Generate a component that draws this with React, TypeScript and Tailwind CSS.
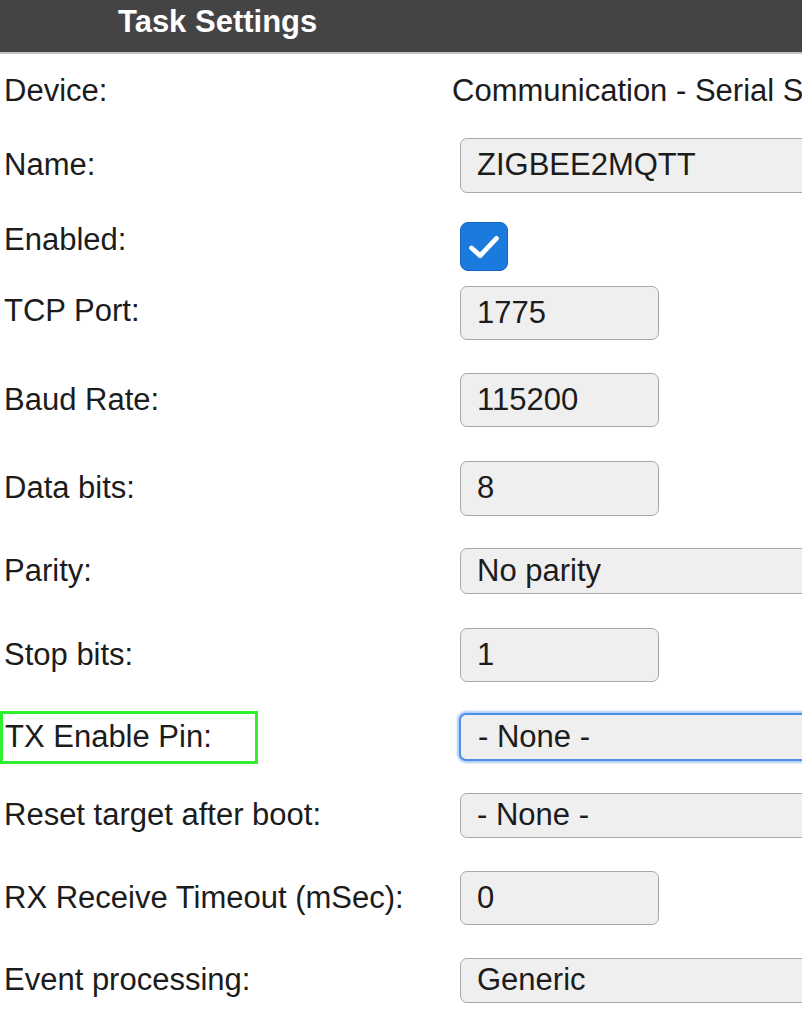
import React from "react";

type Row = {
  label: string;
  row: string;
  kind: "text" | "input" | "wide" | "select" | "focus" | "check";
  value?: string;
  labelClass?: string;
};

const rows: Row[] = [
  { label: "Device:", row: "h-[74px]", kind: "text", value: "Communication - Serial Server" },
  { label: "Name:", row: "mt-[10px] h-[55px]", kind: "wide", value: "ZIGBEE2MQTT" },
  { label: "Enabled:", row: "mt-[29px] h-[49px]", kind: "check", labelClass: "-mt-[12px]" },
  { label: "TCP Port:", row: "mt-[15px] h-[54px]", kind: "input", value: "1775", labelClass: "-mt-[4px]" },
  { label: "Baud Rate:", row: "mt-[33px] h-[54px]", kind: "input", value: "115200" },
  { label: "Data bits:", row: "mt-[34px] h-[55px]", kind: "input", value: "8" },
  { label: "Parity:", row: "mt-[32px] h-[46px]", kind: "select", value: "No parity" },
  { label: "Stop bits:", row: "mt-[34px] h-[54px]", kind: "input", value: "1" },
  { label: "TX Enable Pin:", row: "mt-[30px] h-[50px]", kind: "focus", value: "- None -" },
  { label: "Reset target after boot:", row: "mt-[31px] h-[45px]", kind: "select", value: "- None -" },
  { label: "RX Receive Timeout (mSec):", row: "mt-[33px] h-[54px]", kind: "input", value: "0" },
  { label: "Event processing:", row: "mt-[33px] h-[45px]", kind: "select", value: "Generic" },
];

function Control({ row }: { row: Row }) {
  if (row.kind === "text") {
    return <span className="shrink-0 whitespace-nowrap">{row.value}</span>;
  }
  if (row.kind === "check") {
    return (
      <div className="ml-[8px] flex h-[49px] w-[48px] shrink-0 items-center justify-center rounded-[8px] border border-[#1565c0] bg-[#1a7ade]">
        <svg width="48" height="48" viewBox="0 0 48 48">
          <path d="M11 25 L20 33 L37 15" fill="none" stroke="#fff" strokeWidth="5" strokeLinecap="round" strokeLinejoin="round" />
        </svg>
      </div>
    );
  }
  if (row.kind === "input") {
    return (
      <div className="ml-[8px] flex h-full w-[199px] shrink-0 items-center rounded-[7px] border-[1.5px] border-[#a9a9a9] bg-[#efefef] pl-[16px]">
        {row.value}
      </div>
    );
  }
  if (row.kind === "focus") {
    return (
      <div className="ml-[7px] flex h-[48px] w-[520px] shrink-0 items-center rounded-[7px] border-2 border-[#4f8ee6] bg-[#efefef] pl-[17px] shadow-[0_0_2px_2px_rgba(110,160,240,0.55)]">
        {row.value}
      </div>
    );
  }
  return (
    <div className="ml-[8px] flex h-full w-[520px] shrink-0 items-center rounded-[7px] border-[1.5px] border-[#a9a9a9] bg-[#efefef] pl-[16px]">
      {row.value}
    </div>
  );
}

export default function App() {
  return (
    <div className="h-[1032px] w-[802px] overflow-hidden bg-white text-[31px] text-[#1c1c1c] font-['Liberation_Sans',Arial,sans-serif]">
      <div className="h-[54px] border-b-2 border-[#c4c4c4] bg-[#444444] pl-[118px] pt-[6px] leading-none">
        <span className="font-bold text-white">Task Settings</span>
      </div>
      {rows.map((row) => (
        <div key={row.label} className={`flex items-center ${row.row}`}>
          <div className="w-[452px] shrink-0">
            {row.kind === "focus" ? (
              <div className="flex h-[53px] w-[258px] items-center border-[3px] border-[#2ef02e] pl-[2px]">
                {row.label}
              </div>
            ) : (
              <div className={`pl-[4px] ${row.labelClass ?? ""}`}>{row.label}</div>
            )}
          </div>
          <Control row={row} />
        </div>
      ))}
    </div>
  );
}
